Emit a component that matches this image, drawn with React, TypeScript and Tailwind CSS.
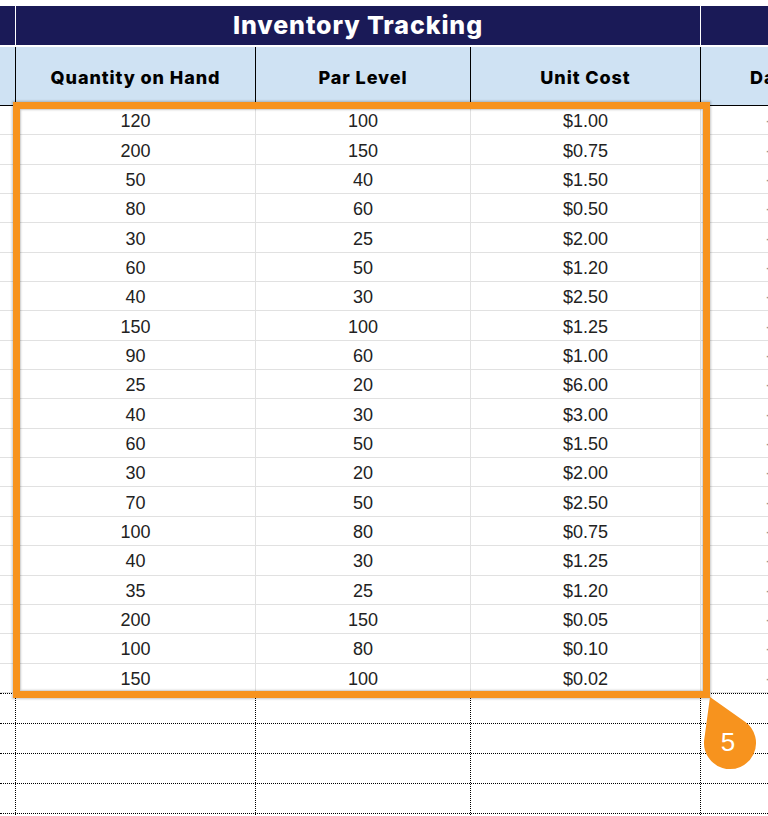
import React from 'react';

// Inventory sheet: quantities, par levels and unit costs
const rows: [string, string, string][] = [
  ['120', '100', '$1.00'],
  ['200', '150', '$0.75'],
  ['50', '40', '$1.50'],
  ['80', '60', '$0.50'],
  ['30', '25', '$2.00'],
  ['60', '50', '$1.20'],
  ['40', '30', '$2.50'],
  ['150', '100', '$1.25'],
  ['90', '60', '$1.00'],
  ['25', '20', '$6.00'],
  ['40', '30', '$3.00'],
  ['60', '50', '$1.50'],
  ['30', '20', '$2.00'],
  ['70', '50', '$2.50'],
  ['100', '80', '$0.75'],
  ['40', '30', '$1.25'],
  ['35', '25', '$1.20'],
  ['200', '150', '$0.05'],
  ['100', '80', '$0.10'],
  ['150', '100', '$0.02'],
];

const headFont = { fontFamily: 'Inter, "Open Sans", sans-serif' };
const cellFont = { fontFamily: '"Liberation Sans", Arial, sans-serif' };

function DataRow({ q, par, cost }: { q: string; par: string; cost: string }) {
  const cell = 'h-full flex items-center justify-center pt-[2px] border-r border-[#e1e1e1]';
  return (
    <div className="flex h-[29.35px] border-b border-[#e1e1e1] text-[18px] leading-[18px] text-[#222]" style={cellFont}>
      <div className="w-[16px] shrink-0 h-full border-r border-[#e1e1e1]" />
      <div className={`w-[240px] shrink-0 ${cell}`}>{q}</div>
      <div className={`w-[215px] shrink-0 ${cell}`}>{par}</div>
      <div className={`w-[230px] shrink-0 ${cell}`}>{cost}</div>
      <div className="flex-1 h-full flex items-center pt-[2px] pl-[65px] text-[#999] overflow-hidden whitespace-nowrap">-</div>
    </div>
  );
}

function EmptyRow() {
  return (
    <div className="flex h-[30px] border-b border-dotted border-black">
      <div className="w-[16px] shrink-0 h-full border-r border-dotted border-black" />
      <div className="w-[240px] shrink-0 h-full border-r border-dotted border-black" />
      <div className="w-[215px] shrink-0 h-full border-r border-dotted border-black" />
      <div className="w-[230px] shrink-0 h-full border-r border-dotted border-black" />
      <div className="flex-1 h-full" />
    </div>
  );
}

export default function App() {
  return (
    <div className="relative w-[768px] h-[816px] overflow-hidden bg-white pt-[6px]">
      {/* title band */}
      <div className="flex h-[39px] bg-[#1a1a57]" style={headFont}>
        <div className="w-[16px] shrink-0 border-r border-white" />
        <div className="w-[685px] shrink-0 flex items-center justify-center border-r border-white text-white text-[25px] font-extrabold tracking-[0.9px]">
          Inventory Tracking
        </div>
        <div className="flex-1" />
      </div>

      {/* column headers */}
      <div className="flex h-[59px] mt-[2px] bg-[#cfe2f3] border-b border-black text-[18px] font-extrabold tracking-[0.9px] text-black" style={headFont}>
        <div className="w-[16px] shrink-0 border-r border-black" />
        <div className="w-[240px] shrink-0 flex items-center justify-center pt-[3px] border-r border-black">Quantity on Hand</div>
        <div className="w-[215px] shrink-0 flex items-center justify-center pt-[3px] border-r border-black">Par Level</div>
        <div className="w-[230px] shrink-0 flex items-center justify-center pt-[3px] border-r border-black">Unit Cost</div>
        <div className="flex-1 flex items-center pt-[3px] pl-[49px] whitespace-nowrap overflow-hidden">Date Ordered</div>
      </div>

      {rows.map(([q, par, cost], i) => (
        <DataRow key={i} q={q} par={par} cost={cost} />
      ))}

      <div className="border-t border-dotted border-black">
        {[0, 1, 2, 3, 4].map((i) => (
          <EmptyRow key={i} />
        ))}
      </div>

      {/* selection highlight */}
      <div className="absolute left-[13px] top-[102px] w-[697px] h-[596px] border-[7px] border-[#f7931e] shadow-[0_0_2px_1px_rgba(0,0,0,0.22),inset_0_0_2px_1px_rgba(0,0,0,0.22)] pointer-events-none" />

      {/* step marker */}
      <div className="absolute left-[700px] top-[690px] w-[68px] h-[90px]">
        <svg width="68" height="90" viewBox="0 0 68 90" className="absolute left-0 top-0">
          <path d="M10 7 L45 31.8 A26 26 0 1 1 4.25 49.5 Z" fill="#f7931e" />
        </svg>
        <span
          className="absolute left-[15px] top-[37px] w-[26px] text-center text-white text-[26px] leading-[30px]"
          style={cellFont}
        >
          5
        </span>
      </div>
    </div>
  );
}
